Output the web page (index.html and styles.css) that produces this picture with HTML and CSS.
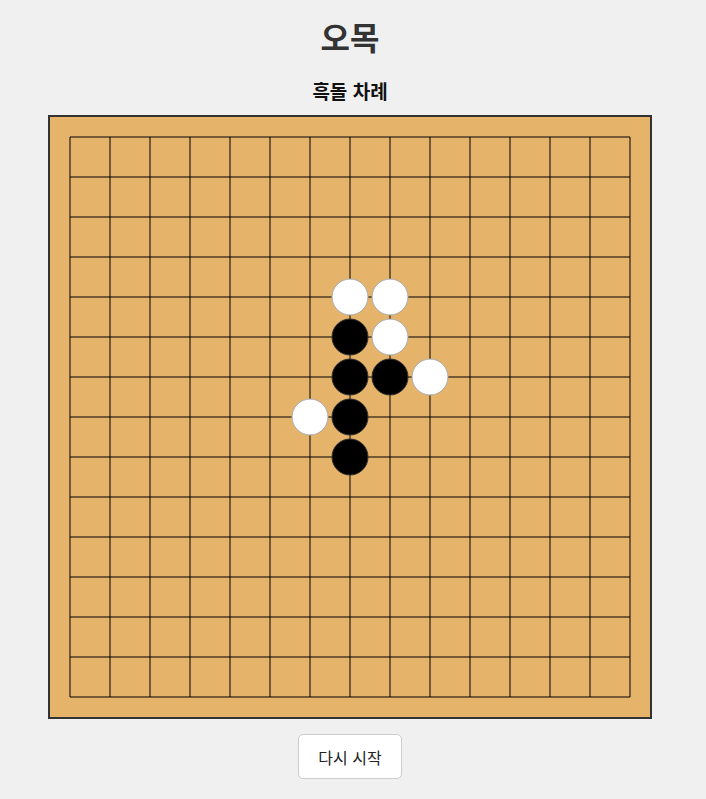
FILE: index.html
```html
<!DOCTYPE html>
<html lang="ko">
<head>
    <meta charset="UTF-8">
    <meta name="viewport" content="width=device-width, initial-scale=1.0">
    <title>오목</title>
    <link rel="stylesheet" href="styles.css">
</head>
<body>
    <div class="game">
        <h1>오목</h1>
        <div id="status" class="status">흑돌 차례</div>
        <div class="board">
            <svg id="boardSvg" width="600" height="600" viewBox="0 0 600 600"></svg>
        </div>
        <button id="restart" type="button">다시 시작</button>
    </div>
    <script src="script.js"></script>
</body>
</html>
```

FILE: styles.css
```css
body {
    margin: 0;
    background-color: #f0f0f0;
    font-family: "Noto Sans CJK KR", "Noto Sans", sans-serif;
    color: #333;
}
.game {
    width: 700px;
    display: flex;
    flex-direction: column;
    align-items: center;
}
h1 {
    font-size: 32px;
    line-height: 40px;
    margin: 16px 0 0;
    font-weight: bold;
}
.status {
    font-size: 19px;
    line-height: 24px;
    font-weight: bold;
    color: #111;
    margin-top: 23px;
}
.board {
    margin-top: 12px;
    width: 600px;
    height: 600px;
    border: 2px solid #333;
    background-color: #e6b36a;
}
.board svg {
    display: block;
}
button {
    margin-top: 15px;
    height: 45px;
    padding: 0 19px;
    font-family: inherit;
    font-size: 16px;
    color: #222;
    background-color: #fff;
    border: 1px solid #ccc;
    border-radius: 5px;
    cursor: pointer;
}
button:hover {
    background-color: #f7f7f7;
}
```

FILE: script.js
```js
const SIZE = 15;
const CELL = 40;
const PAD = 20;
const NS = 'http://www.w3.org/2000/svg';
const svg = document.getElementById('boardSvg');

// 0 = empty, 1 = black, 2 = white
let board = [];
let turn = 1;

const startMoves = [
    [7, 5, 1], [7, 4, 2], [7, 6, 1], [8, 4, 2], [8, 6, 1],
    [8, 5, 2], [7, 7, 1], [9, 6, 2], [7, 8, 1], [6, 7, 2]
];

function reset(withMoves) {
    board = Array.from({ length: SIZE }, () => Array(SIZE).fill(0));
    turn = 1;
    if (withMoves) {
        startMoves.forEach(([x, y, c]) => { board[y][x] = c; });
    }
    draw();
}

function draw() {
    svg.innerHTML = '';
    for (let i = 0; i < SIZE; i++) {
        const p = PAD + i * CELL;
        addLine(PAD, p, PAD + (SIZE - 1) * CELL, p);
        addLine(p, PAD, p, PAD + (SIZE - 1) * CELL);
    }
    for (let y = 0; y < SIZE; y++) {
        for (let x = 0; x < SIZE; x++) {
            if (!board[y][x]) continue;
            const c = document.createElementNS(NS, 'circle');
            c.setAttribute('cx', PAD + x * CELL);
            c.setAttribute('cy', PAD + y * CELL);
            c.setAttribute('r', 18);
            c.setAttribute('fill', board[y][x] === 1 ? '#000' : '#fff');
            c.setAttribute('stroke', board[y][x] === 1 ? '#333' : '#aaa');
            svg.appendChild(c);
        }
    }
    document.getElementById('status').textContent = turn === 1 ? '흑돌 차례' : '백돌 차례';
}

function addLine(x1, y1, x2, y2) {
    const l = document.createElementNS(NS, 'line');
    l.setAttribute('x1', x1);
    l.setAttribute('y1', y1);
    l.setAttribute('x2', x2);
    l.setAttribute('y2', y2);
    l.setAttribute('stroke', '#000');
    l.setAttribute('stroke-width', 1);
    svg.appendChild(l);
}

svg.addEventListener('click', (e) => {
    const rect = svg.getBoundingClientRect();
    const x = Math.round((e.clientX - rect.left - PAD) / CELL);
    const y = Math.round((e.clientY - rect.top - PAD) / CELL);
    if (x < 0 || y < 0 || x >= SIZE || y >= SIZE || board[y][x]) return;
    board[y][x] = turn;
    turn = turn === 1 ? 2 : 1;
    draw();
});

document.getElementById('restart').addEventListener('click', () => reset(false));

reset(true);
```
